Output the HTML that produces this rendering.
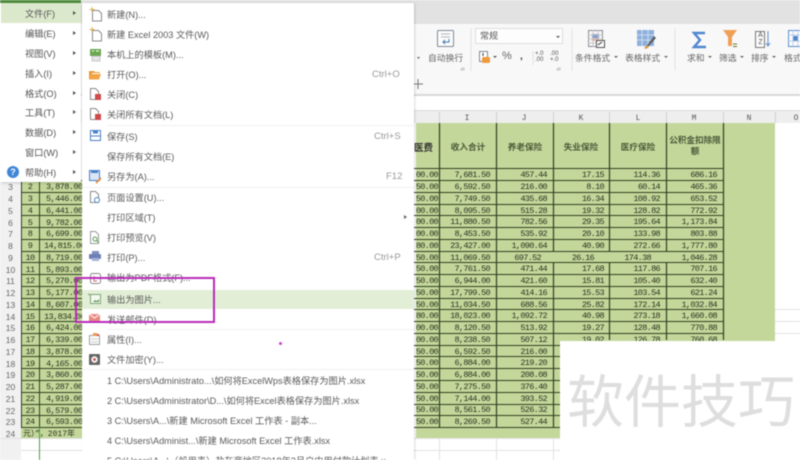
<!DOCTYPE html>
<html><head><meta charset="utf-8">
<style>
html,body{margin:0;padding:0;background:#fff}
#p{position:relative;width:800px;height:460px;overflow:hidden;background:#fff;font-family:"Liberation Sans","Noto Sans CJK SC",sans-serif;filter:blur(.45px)}
#p div{position:absolute;white-space:nowrap}
svg{position:absolute;left:0;top:0}
.rb{font-size:8.8px;color:#666;line-height:12px;top:52px}
.gh{position:absolute;left:0;top:111px;width:800px;height:12px;background:#eee}
.ch{top:113px;width:20px;text-align:center;font:8px/11px "Liberation Mono",monospace;color:#555}
.hd{top:141px;width:56px;text-align:center;font:bold 8.6px/12px "Noto Sans CJK SC",sans-serif;color:#4a5a38}
#rt{left:414px;top:170.3px;width:320px;height:260px}
#rt .r{left:0;width:320px;height:11.76px;font:8.6px/11.76px "Liberation Mono",monospace;letter-spacing:-.72px;color:#2c3520;position:relative;display:block}
#rt .r span{position:absolute;top:0;text-align:right;width:54px}
.a{left:-30px}.b{left:22px}.c{left:79px}.d{left:136px}.e{left:192px}.f{left:249px}
#lt{left:0;top:182.3px;width:82px;height:260px;overflow:hidden}
#lt .r{position:relative;display:block;height:11.76px;width:82px;font:8.6px/11.76px "Liberation Mono",monospace;letter-spacing:-.6px;color:#2c3520}
#lt .r i{position:absolute;left:0;width:21px;text-align:center;font-style:normal;color:#666;letter-spacing:0;font-family:"Liberation Sans",sans-serif;font-size:8.5px}
#lt .r b{position:absolute;left:21px;width:18px;text-align:center;font-weight:normal}
#lt .r u{position:absolute;left:46px;text-decoration:none}
.m1{left:25px;font-size:9.2px;line-height:12px;color:#555;margin-top:1px}
.ar{left:73px;width:0;height:0;border-left:3px solid #555;border-top:2px solid transparent;border-bottom:2px solid transparent}
.m2{left:107px;font-size:9.2px;line-height:12px;color:#5a5a5a;margin-top:1px}
.sc{font-size:9.500px;line-height:12px;color:#999;margin-top:1px}
</style></head><body>
<div id="p">
<!-- top chrome -->
<div style="left:0;top:0;width:800px;height:24px;background:#e2e2e2"></div>
<div style="left:0;top:24px;width:800px;height:70px;background:#f8f8f8"></div>
<div style="left:0;top:94px;width:800px;height:2px;background:#d8d8d8"></div>
<div style="left:0;top:96px;width:800px;height:14px;background:#fff"></div>
<div style="left:0;top:110px;width:800px;height:2px;background:#dcdcdc"></div>
<div class="gh"></div>
<div style="left:416px;top:123px;width:359px;height:315px;background:#c4d79b"></div>

<!-- ribbon -->
<svg width="800" height="110">
<g fill="none">
<rect x="437.5" y="30.5" width="16" height="16" rx="1" fill="#fbfbfb" stroke="#7f8a96"/>
<path d="M441 34h9M441 37h9" stroke="#b5b5b5"/>
<path d="M449 39v3h-6m2-2l-2 2 2 2" stroke="#3f79b5"/>
<path d="M471 28v43M533 51v14M572 28v43M675 28v42" stroke="#e4e4e4"/>
<rect x="475.5" y="28.5" width="87" height="15" fill="#fdfdfd" stroke="#dedede"/>
<path d="M556 36h4l-2 2z" fill="#555"/>
<rect x="479.5" y="51.5" width="8" height="10" fill="#fff" stroke="#7f8a96"/>
<rect x="482" y="57" width="8" height="6" rx="1.5" fill="#ee9a3c"/>
<path d="M483 53v3" stroke="#333"/>
<path d="M493 56h4l-2 2z" fill="#555"/>
<path d="M462 68h2v2h-3zM558 68h2v2h-3z" stroke="#999" stroke-width=".6"/>
<!-- cond format -->
<rect x="588.5" y="30.5" width="14" height="16" fill="#f4f4f4" stroke="#8a8f96"/>
<rect x="592" y="34" width="7" height="4" fill="#7e9fd0"/><rect x="592" y="38" width="7" height="3" fill="#e8b8a8"/>
<path d="M588 35h15M588 39h15M588 43h10M593 30v17M598 30v17" stroke="#c0c0c0" stroke-width=".7"/>
<rect x="596.5" y="40.5" width="8" height="7" fill="#fafafa" stroke="#555"/>
<path d="M598 45l4-3" stroke="#333"/>
<!-- table style -->
<rect x="637" y="30" width="17" height="16" fill="#8eb0dc"/>
<path d="M637 35h17M637 40h17M642 30v16M648 30v16" stroke="#dbe6f4" stroke-width=".8"/>
<path d="M646 47l8-11 2 2-8 9z" fill="#5d5d5d"/><path d="M644 48l3-3 2 2-3 2z" fill="#d39a4a"/>
<!-- sum -->
<path d="M705 33h-11l6 7-6 7h12" stroke="#4f85cf" stroke-width="2.4"/>
<!-- filter -->
<path d="M723 30h14l-5 7v9h-4v-9z" fill="#f0a056" stroke="none"/>
<path d="M733 44h4M733 46.500h4" stroke="#5d7a2c"/>
<!-- sort -->
<rect x="755.500" y="31.500" width="9" height="16" fill="#fafafa" stroke="#777"/>
<path d="M768 31v15m-2-3l2 3 2-3" stroke="#5b8fd0"/>
<!-- format -->
<rect x="788.500" y="30.500" width="15" height="16" fill="#fafafa" stroke="#5b8fd0"/>
<rect x="793" y="36" width="5" height="5" fill="#4f85cf"/>
<path d="M788 35h15M788 41h15M793 30v16M798 30v16" stroke="#a8c4e4" stroke-width=".7"/>
<path d="M418 79v10M413 84h10" stroke="#777"/>
<path d="M417 57h3l-1.500 2z" fill="#666"/>
<path d="M614 56h4l-2 2zM664 56h4l-2 2zM708 56h4l-2 2zM740 56h4l-2 2zM772 56h4l-2 2z" fill="#666"/>
</g>
</svg>
<div class="rb" style="left:428px">自动换行</div>
<div style="left:480px;top:30px;font-size:9px;line-height:13px;color:#555">常规</div>
<div style="left:502px;top:50px;font-size:11px;line-height:13px;color:#666">%</div>
<div style="left:520px;top:50px;font-size:10px;line-height:13px;color:#444;font-weight:bold">,</div>
<div style="left:535px;top:51px;font-size:6px;line-height:6px;color:#555;text-align:center">+.0<br>.00</div>
<div style="left:550px;top:51px;font-size:6px;line-height:6px;color:#555;text-align:center">.00<br>+.0</div>
<div class="rb" style="left:575px">条件格式</div>
<div class="rb" style="left:625px">表格样式</div>
<div class="rb" style="left:687px">求和</div>
<div class="rb" style="left:719px">筛选</div>
<div class="rb" style="left:751px">排序</div>
<div class="rb" style="left:784px">格式</div>
<div style="left:756.500px;top:32px;width:8px;text-align:center;font:7px/7px 'Liberation Sans',sans-serif;color:#555">A<br>Z</div>

<!-- col headers -->
<div class="ch" style="left:457px">I</div><div class="ch" style="left:514px">J</div><div class="ch" style="left:571px">K</div><div class="ch" style="left:628px">L</div><div class="ch" style="left:684px">M</div><div class="ch" style="left:739px">N</div><div class="ch" style="left:786px">O</div>
<svg width="800" height="124"><path d="M439.500 112v11M496.500 112v11M553.500 112v11M609.500 112v11M666.500 112v11M723.500 112v11M775.500 112v11" stroke="#d0d0d0"/></svg>

<!-- headers -->
<div class="hd" style="left:414px;width:14px;text-align:left;font-size:9.500px;color:#333">医费</div>
<div class="hd" style="left:440px">收入合计</div>
<div class="hd" style="left:497px">养老保险</div>
<div class="hd" style="left:553px">失业保险</div>
<div class="hd" style="left:610px">医疗保险</div>
<div class="hd" style="left:667px;top:135px;white-space:normal;line-height:11px;font-size:8.600px">公积金扣除限额</div>

<!-- right table data -->
<div id="rt">
<div class="r"><span class="a">00.00</span><span class="b">7,681.50</span><span class="c">457.44</span><span class="d">17.15</span><span class="e">114.36</span><span class="f">686.16</span></div>
<div class="r"><span class="a">50.00</span><span class="b">6,592.50</span><span class="c">216.00</span><span class="d">8.10</span><span class="e">60.14</span><span class="f">465.36</span></div>
<div class="r"><span class="a">50.00</span><span class="b">7,749.50</span><span class="c">435.68</span><span class="d">16.34</span><span class="e">108.92</span><span class="f">653.52</span></div>
<div class="r"><span class="a">00.00</span><span class="b">8,095.50</span><span class="c">515.28</span><span class="d">19.32</span><span class="e">128.82</span><span class="f">772.92</span></div>
<div class="r"><span class="a">00.00</span><span class="b">11,880.50</span><span class="c">782.56</span><span class="d">29.35</span><span class="e">195.64</span><span class="f">1,173.84</span></div>
<div class="r"><span class="a">00.00</span><span class="b">8,453.50</span><span class="c">535.92</span><span class="d">20.10</span><span class="e">133.98</span><span class="f">803.88</span></div>
<div class="r"><span class="a">80.00</span><span class="b">23,427.00</span><span class="c">1,090.64</span><span class="d">40.90</span><span class="e">272.66</span><span class="f">1,777.80</span></div>
<div class="r"><span class="a">50.00</span><span class="b">11,069.50</span><span class="c" style="left:73px">697.52</span><span class="d" style="left:126px">26.16</span><span class="e" style="left:183px">174.38</span><span class="f">1,046.28</span></div>
<div class="r"><span class="a">50.00</span><span class="b">7,761.50</span><span class="c">471.44</span><span class="d">17.68</span><span class="e">117.86</span><span class="f">707.16</span></div>
<div class="r"><span class="a">50.00</span><span class="b">6,944.00</span><span class="c">421.60</span><span class="d">15.81</span><span class="e">105.40</span><span class="f">632.40</span></div>
<div class="r"><span class="a">50.00</span><span class="b">17,799.50</span><span class="c">414.16</span><span class="d">15.53</span><span class="e">103.54</span><span class="f">621.24</span></div>
<div class="r"><span class="a">50.00</span><span class="b">11,034.50</span><span class="c">688.56</span><span class="d">25.82</span><span class="e">172.14</span><span class="f">1,032.84</span></div>
<div class="r"><span class="a">80.00</span><span class="b">18,023.00</span><span class="c">1,092.72</span><span class="d">40.98</span><span class="e">273.18</span><span class="f">1,660.08</span></div>
<div class="r"><span class="a">00.00</span><span class="b">8,120.50</span><span class="c">513.92</span><span class="d">19.27</span><span class="e">128.48</span><span class="f">770.88</span></div>
<div class="r"><span class="a">00.00</span><span class="b">8,238.50</span><span class="c">507.12</span><span class="d">19.02</span><span class="e">126.78</span><span class="f">760.68</span></div>
<div class="r"><span class="a">50.00</span><span class="b">6,592.50</span><span class="c">216.00</span></div>
<div class="r"><span class="a">50.00</span><span class="b">6,884.00</span><span class="c">219.20</span></div>
<div class="r"><span class="a">50.00</span><span class="b">6,884.00</span><span class="c">208.08</span></div>
<div class="r"><span class="a">50.00</span><span class="b">7,275.50</span><span class="c">376.40</span></div>
<div class="r"><span class="a">50.00</span><span class="b">7,144.00</span><span class="c">393.52</span></div>
<div class="r"><span class="a">50.00</span><span class="b">8,561.50</span><span class="c">526.32</span></div>
<div class="r"><span class="a">50.00</span><span class="b">8,269.50</span><span class="c">527.44</span></div>
</div>

<!-- table grid -->
<svg width="800" height="460">
<g stroke="#2f4020" stroke-width="1" fill="none">
<path d="M414 168.500H723M414 180.500H723M414 192.500H723M414 204.500H723M414 215.500H723M414 227.500H723M414 239.500H723M414 251.500H723M414 262.500H723M414 274.500H723M414 286.500H723M414 298.500H723M414 309.500H723M414 321.500H723M414 333.500H723M414 345.500H723M414 356.500H723M414 368.500H723M414 380.500H723M414 392.500H723M414 404.500H723M414 415.500H723M414 427.500H560"/>
<path d="M439.500 123V427M496.500 123V427" stroke-width="1.200"/>
<path d="M553.500 123V251M553.500 262V427M609.500 123V251M609.500 262V340M666.500 123V251M666.500 262V340M723.500 123V340" stroke-width="1.200"/>
</g>
<g stroke="#e2e2e2"><path d="M414 438.500H560M414 450.500H560M439.500 438V460M496.500 438V460M553.500 438V460"/>
<path d="M775 309.500H800M775 321.500H800M775 333.500H800"/></g>
</svg>

<!-- left sheet -->
<div style="left:0;top:180px;width:21px;height:280px;background:#f1f1f1"></div>
<div style="left:21px;top:180px;width:61px;height:258px;background:#c4d79b"></div>
<div id="lt">
<div class="r"><i>3</i><b>2</b><u>3,878.00</u></div>
<div class="r"><i>4</i><b>3</b><u>5,446.00</u></div>
<div class="r"><i>5</i><b>4</b><u>6,441.00</u></div>
<div class="r"><i>6</i><b>5</b><u>9,782.00</u></div>
<div class="r"><i>7</i><b>8</b><u>6,699.00</u></div>
<div class="r"><i>8</i><b>9</b><u style="left:44px">14,815.00</u></div>
<div class="r"><i>9</i><b>10</b><u>8,719.00</u></div>
<div class="r"><i>10</i><b>11</b><u>5,893.00</u></div>
<div class="r"><i>11</i><b>12</b><u>5,270.00</u></div>
<div class="r"><i>12</i><b>13</b><u>5,177.00</u></div>
<div class="r"><i>13</i><b>14</b><u>8,607.00</u></div>
<div class="r"><i>14</i><b>15</b><u style="left:44px">13,834.00</u></div>
<div class="r"><i>15</i><b>16</b><u>6,424.00</u></div>
<div class="r"><i>16</i><b>17</b><u>6,339.00</u></div>
<div class="r"><i>17</i><b>18</b><u>3,878.00</u></div>
<div class="r"><i>18</i><b>19</b><u>4,165.00</u></div>
<div class="r"><i>19</i><b>20</b><u>3,860.00</u></div>
<div class="r"><i>20</i><b>21</b><u>5,287.00</u></div>
<div class="r"><i>21</i><b>22</b><u>4,919.00</u></div>
<div class="r"><i>22</i><b>23</b><u>6,579.00</u></div>
<div class="r"><i>23</i><b>24</b><u>6,593.00</u></div>
<div class="r"><i>24</i><u style="left:23px;font-family:'Liberation Mono','Noto Sans CJK SC',monospace;letter-spacing:0;font-size:8px">元）”，2017年</u></div>
<div class="r"><i>25</i></div>
<div class="r"><i>26</i></div>
</div>
<svg width="82" height="460">
<g stroke="#2f4020" fill="none"><path d="M21 180.500H82M21 192.500H82M21 204.500H82M21 215.500H82M21 227.500H82M21 239.500H82M21 251.500H82M21 262.500H82M21 274.500H82M21 286.500H82M21 298.500H82M21 309.500H82M21 321.500H82M21 333.500H82M21 345.500H82M21 356.500H82M21 368.500H82M21 380.500H82M21 392.500H82M21 404.500H82M21 415.500H82M21 427.500H82M21.500 180V427M39.500 180V427"/></g>
<path d="M21 438.500H82M21 450.500H82M0 438.500H21" stroke="#e0e0e0"/>
<path d="M39.500 427V460" stroke="#4f9a4a"/>
</svg>

<!-- menu left -->
<div style="left:0;top:3px;width:81px;height:179px;background:#fff;box-shadow:1px 1px 3px rgba(0,0,0,.18)"></div>
<div style="left:0;top:0;width:81px;height:3px;background:#4d8a3c"></div>
<div style="left:1px;top:3px;width:80px;height:20px;background:#dce8cc"></div>
<div class="m1" style="top:7px">文件(F)</div><div class="ar" style="top:11px"></div>
<div class="m1" style="top:27px">编辑(E)</div><div class="ar" style="top:31px"></div>
<div class="m1" style="top:47px">视图(V)</div><div class="ar" style="top:51px"></div>
<div class="m1" style="top:67px">插入(I)</div><div class="ar" style="top:71px"></div>
<div class="m1" style="top:87px">格式(O)</div><div class="ar" style="top:91px"></div>
<div class="m1" style="top:106px">工具(T)</div><div class="ar" style="top:110px"></div>
<div class="m1" style="top:126px">数据(D)</div><div class="ar" style="top:130px"></div>
<div class="m1" style="top:146px">窗口(W)</div><div class="ar" style="top:150px"></div>
<div class="m1" style="top:166px">帮助(H)</div><div class="ar" style="top:170px"></div>
<div style="left:7px;top:166px;width:12px;height:12px;border-radius:6px;background:#3f86d6;color:#fff;font:bold 9px/12px 'Liberation Sans',sans-serif;text-align:center">?</div>

<!-- menu right -->
<div style="left:82px;top:3px;width:332px;height:457px;background:#fff;box-shadow:1px 0 2px rgba(0,0,0,.15)"></div>
<div style="left:82px;top:290px;width:332px;height:19px;background:#e2eed6"></div>
<svg width="420" height="460">
<path d="M107 125.500H414M82 187.500H414M107 329.500H414M82 369.500H414" stroke="#f0f0f0"/>
<g fill="none">
<!-- new -->
<path d="M92.500 10.500h6l3 3v7.500h-9z" stroke="#8a8a8a" fill="#fff"/><path d="M92 7v5M89.500 9.500h5" stroke="#e8b050"/>
<path d="M92.500 30.500h6l3 3v7.500h-9z" stroke="#8a8a8a" fill="#fff"/><path d="M92 27v5M89.500 29.500h5" stroke="#e8b050"/>
<!-- template -->
<rect x="90" y="49" width="11" height="7" fill="#6aa84f"/><rect x="92" y="56" width="8" height="5" fill="#e6e6e6" stroke="#aaa" stroke-width=".6"/><path d="M92 51h2M96 51h3" stroke="#fff"/>
<!-- open -->
<path d="M89 71h5l1 1h5v1h-8l-1 6h-2z" fill="#e79a3a"/><path d="M91 74h10l-2 5.500H89z" fill="#f2a447"/>
<!-- close -->
<path d="M90.500 88.500h5l3 3v8h-8z" stroke="#8a8a8a"/><rect x="95" y="94" width="6" height="6" fill="#cf4a4a"/>
<path d="M90.500 108.500h5l3 3v8h-8z" stroke="#8a8a8a"/><rect x="95" y="114" width="6" height="6" fill="#cf4a4a"/>
<!-- save -->
<rect x="90.500" y="130.500" width="10" height="10" stroke="#4a80c8" fill="#fff"/><rect x="93" y="130" width="5" height="3.500" fill="#4a80c8"/><path d="M91 136h9" stroke="#4a80c8"/>
<!-- save as -->
<rect x="89.500" y="170.500" width="10" height="10" stroke="#4a80c8" fill="#dbe6f4"/><rect x="91" y="170" width="7" height="3" fill="#4a80c8"/><path d="M96 183l5-5" stroke="#e08a3c" stroke-width="1.800"/>
<!-- page setup -->
<path d="M90.500 191.500h5l3 3v8h-8z" stroke="#8a8a8a"/><circle cx="97" cy="200" r="2.500" stroke="#4a80c8" fill="#fff"/>
<!-- preview -->
<path d="M90.500 231.500h5l3 3v9h-8z" stroke="#9a9a9a"/><circle cx="95" cy="239" r="2" stroke="#5a9a5a"/><path d="M96.500 240.500l2 2" stroke="#5a9a5a"/>
<!-- print -->
<rect x="92" y="251" width="7" height="3" fill="#7f8fc0"/><rect x="89" y="254" width="12" height="5" rx="1" fill="#6f7fb5"/><rect x="92" y="258" width="7" height="3" fill="#a7b3d6"/>
<!-- pdf -->
<rect x="90.500" y="273.500" width="10" height="10" rx="2" stroke="#8a8a8a"/><path d="M94 276v5h3" stroke="#cf6a6a"/>
<!-- image -->
<rect x="90.500" y="294.500" width="10" height="9" stroke="#7fa878" fill="#f6f8f2"/><path d="M93 302l2-2 2 1 2-2v3z" fill="#6a9a5a"/><path d="M88 294l2 1" stroke="#7fa878"/>
<!-- mail -->
<rect x="89" y="314" width="11" height="7" fill="#e88a80"/><path d="M89 314l5.500 4 5.500-4" stroke="#fff"/>
<!-- props -->
<rect x="89.500" y="335.500" width="10" height="9" stroke="#a0a0a0" fill="#fbfbfb"/><rect x="93" y="333" width="4" height="3" fill="#e89a50"/><path d="M91 339h7M91 342h7" stroke="#ccc"/><rect x="97" y="334" width="2" height="2" fill="#d04a4a"/>
<!-- encrypt -->
<rect x="89" y="354" width="11" height="11" rx="1" fill="#666"/><circle cx="94.500" cy="359.500" r="3.200" fill="#fff"/><circle cx="94.500" cy="359.500" r="1.500" fill="#d05a5a"/>
</g>
<path d="M404 215l3 2-3 2z" fill="#666"/>
</svg>
<div class="m2" style="top:8px">新建(N)...</div>
<div class="m2" style="top:28px">新建 Excel 2003 文件(W)</div>
<div class="m2" style="top:48px">本机上的模板(M)...</div>
<div class="m2" style="top:68px">打开(O)...</div>
<div class="m2" style="top:88px">关闭(C)</div>
<div class="m2" style="top:108px">关闭所有文档(L)</div>
<div class="m2" style="top:130px">保存(S)</div>
<div class="m2" style="top:150px">保存所有文档(E)</div>
<div class="m2" style="top:170px">另存为(A)...</div>
<div class="m2" style="top:191px">页面设置(U)...</div>
<div class="m2" style="top:211px">打印区域(T)</div>
<div class="m2" style="top:231px">打印预览(V)</div>
<div class="m2" style="top:251px">打印(P)...</div>
<div class="m2" style="top:271px">输出为PDF格式(F)...</div>
<div class="m2" style="top:293px">输出为图片...</div>
<div class="m2" style="top:313px">发送邮件(D)...</div>
<div class="m2" style="top:333px">属性(I)...</div>
<div class="m2" style="top:353px">文件加密(Y)...</div>
<div class="m2" style="top:374px">1 C:\Users\Administrato...\如何将ExcelWps表格保存为图片.xlsx</div>
<div class="m2" style="top:394px">2 C:\Users\Administrator\D...\如何将Excel表格保存为图片.xlsx</div>
<div class="m2" style="top:414px">3 C:\Users\A...\新建 Microsoft Excel 工作表 - 副本...</div>
<div class="m2" style="top:434px">4 C:\Users\Administ...\新建 Microsoft Excel 工作表.xlsx</div>
<div class="m2" style="top:454px">5 C:\Users\A...\（船用表）盐灰商地区2018年2月户内用付款计划表.x</div>
<div class="sc" style="left:372px;top:68px">Ctrl+O</div>
<div class="sc" style="left:374px;top:130px">Ctrl+S</div>
<div class="sc" style="left:386px;top:170px">F12</div>
<div class="sc" style="left:374px;top:251px">Ctrl+P</div>

<!-- magenta box -->
<div style="left:75px;top:277px;width:136px;height:42px;border:2px solid #b92cb9;box-sizing:content-box"></div>
<div style="left:279px;top:342px;width:3px;height:3px;border-radius:2px;background:#d040d0"></div>

<!-- watermark -->
<div style="left:560px;top:341px;width:240px;height:119px;background:#fff"></div>
<div style="left:567px;top:362px;font-family:'Noto Sans CJK SC','WenQuanYi Zen Hei',sans-serif;font-size:57px;line-height:72px;color:#dedede;letter-spacing:0">软件技巧</div>
</div>
</body></html>
